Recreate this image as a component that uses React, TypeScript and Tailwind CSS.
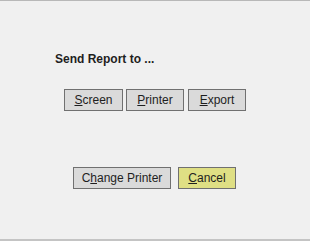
import React from 'react';

const Btn: React.FC<{ w: string; yellow?: boolean; children: React.ReactNode }> = ({ w, yellow, children }) => (
  <button
    className={`${w} h-[22px] border border-[#707070] flex items-center justify-center text-[12px] text-[#1e1e1e] leading-none ${
      yellow ? 'bg-[#dfdf84]' : 'bg-[#dadada]'
    }`}
  >
    <span>{children}</span>
  </button>
);

export default function App() {
  return (
    <div
      className="w-[310px] h-[241px] bg-[#f0f0f0] border-t border-[#b8b8b8] flex flex-col overflow-hidden"
      style={{ fontFamily: '"Liberation Sans", Arial, sans-serif' }}
    >
      <div className="pt-[51px] pl-[55px] text-[12px] font-bold text-[#1e1e1e] leading-[15px]">Send Report to ...</div>

      <div className="flex mt-[22px] pl-[64px]">
        <Btn w="w-[59px]">
          <u>S</u>creen
        </Btn>
        <div className="w-[3px]" />
        <Btn w="w-[58px]">
          <u>P</u>rinter
        </Btn>
        <div className="w-[4px]" />
        <Btn w="w-[58px]">
          <u>E</u>xport
        </Btn>
      </div>

      <div className="flex mt-[56px] pl-[73px] gap-[7px]">
        <Btn w="w-[98px]">
          C<u>h</u>ange Printer
        </Btn>
        <Btn w="w-[58px]" yellow>
          <u>C</u>ancel
        </Btn>
      </div>

      <div className="flex-1" />
      <div className="h-[2px] bg-[#c4c4c4]" />
    </div>
  );
}
